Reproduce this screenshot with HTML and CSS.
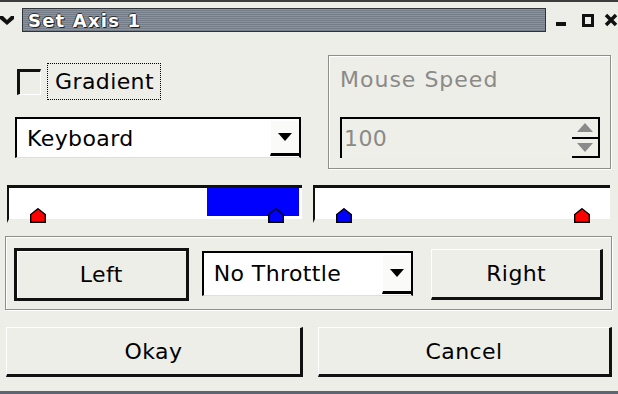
FILE: index.html
```html
<!DOCTYPE html>
<html>
<head>
<meta charset="utf-8">
<link rel="stylesheet" href="styles.css">
</head>
<body>
<div class="topline"></div>
<div class="titlerow">
  <svg class="menu-ico" width="14" height="14" viewBox="0 0 14 14"><path d="M0 3 L3 3 L7 7 L11 3 L14 3 L14 6 L7 12 L0 6 Z" fill="#111"/></svg>
  <div class="titlebar"><span class="title">Set Axis 1</span></div>
  <div class="wctl">
    <svg width="11" height="14" viewBox="0 0 11 14"><rect x="0" y="9" width="10" height="4" fill="#111"/></svg>
    <svg width="12" height="14" viewBox="0 0 12 14"><rect x="1.5" y="2.5" width="9" height="10" fill="none" stroke="#111" stroke-width="3"/></svg>
    <svg width="14" height="14" viewBox="0 0 14 14"><path d="M2 2 L12 12 M12 2 L2 12" stroke="#111" stroke-width="3.5"/></svg>
  </div>
</div>

<div class="row1">
  <div class="leftcol">
    <div class="checkrow">
      <span class="checkbox"></span>
      <span class="focuslabel">Gradient</span>
    </div>
    <div class="combo combo-kb">
      <span class="combo-text">Keyboard</span>
      <span class="combo-btn"><svg width="14" height="8" viewBox="0 0 14 8"><path d="M0 0 H14 L7 8 Z" fill="#000"/></svg></span>
    </div>
  </div>
  <div class="frame speedframe">
    <div class="speedlabel">Mouse Speed</div>
    <div class="spin">
      <span class="spin-text">100</span>
      <span class="spin-btns">
        <span class="spin-up"><svg width="16" height="9" viewBox="0 0 16 9"><path d="M8 0 L16 9 H0 Z" fill="#8a8a8a"/></svg></span>
        <span class="spin-down"><svg width="16" height="9" viewBox="0 0 16 9"><path d="M0 0 H16 L8 9 Z" fill="#8a8a8a"/></svg></span>
      </span>
    </div>
  </div>
</div>

<div class="sliders">
  <div class="slider slider-l">
    <div class="fill" style="left:198px;width:92px"></div>
    <svg class="marker" style="left:21px" width="16" height="15" viewBox="0 0 16 15"><path d="M8 0.7 L15.3 6.5 V14.3 H0.7 V6.5 Z" fill="#f00" stroke="#000" stroke-width="1.4"/></svg>
    <svg class="marker" style="left:259px" width="16" height="15" viewBox="0 0 16 15"><path d="M8 0.7 L15.3 6.5 V14.3 H0.7 V6.5 Z" fill="#00f" stroke="#000" stroke-width="1.4"/></svg>
  </div>
  <div class="slider slider-r">
    <svg class="marker" style="left:21px" width="16" height="15" viewBox="0 0 16 15"><path d="M8 0.7 L15.3 6.5 V14.3 H0.7 V6.5 Z" fill="#00f" stroke="#000" stroke-width="1.4"/></svg>
    <svg class="marker" style="left:259px" width="16" height="15" viewBox="0 0 16 15"><path d="M8 0.7 L15.3 6.5 V14.3 H0.7 V6.5 Z" fill="#f00" stroke="#000" stroke-width="1.4"/></svg>
  </div>
</div>

<div class="frame throttleframe">
  <div class="btn btn-left">Left</div>
  <div class="combo combo-th">
    <span class="combo-text">No Throttle</span>
    <span class="combo-btn"><svg width="14" height="8" viewBox="0 0 14 8"><path d="M0 0 H14 L7 8 Z" fill="#000"/></svg></span>
  </div>
  <div class="btn btn-right">Right</div>
</div>

<div class="bottomrow">
  <div class="btn btn-okay">Okay</div>
  <div class="btn btn-cancel">Cancel</div>
</div>
<div class="bottomline"></div>
</body>
</html>
```

FILE: styles.css
```css
html, body {
  margin: 0;
  padding: 0;
}
body {
  width: 618px;
  height: 394px;
  overflow: hidden;
  position: relative;
  background: #eeeee9;
  font-family: "DejaVu Sans", "Liberation Sans", sans-serif;
  font-size: 22px;
  letter-spacing: 0.4px;
  color: #000;
}
.topline {
  height: 2px;
  background: #3d3d3d;
}
.titlerow {
  display: flex;
  align-items: center;
  height: 24px;
  margin-top: 6px;
}
.menu-ico {
  margin-left: 0;
  flex: none;
}
.titlebar {
  margin-left: 8px;
  width: 523px;
  height: 22px;
  border: 1px solid #2f343a;
  background: repeating-linear-gradient(to bottom, #8a949f 0, #8a949f 1px, #737c87 1px, #737c87 2px);
  display: flex;
  align-items: center;
}
.title {
  margin-left: 5px;
  color: #fff;
  font-weight: bold;
  font-size: 18px;
  letter-spacing: 1.2px;
  text-shadow: 1px 1px 0 #222, -1px 0 0 #333, 0 -1px 0 #333;
}
.wctl {
  display: flex;
  align-items: center;
  margin-left: 10px;
  gap: 0;
}
.wctl svg:nth-child(2) { margin-left: 15px; }
.wctl svg:nth-child(3) { margin-left: 10px; }

.row1 {
  display: flex;
  gap: 27px;
  margin-top: 23px;
  padding-left: 15px;
}
.leftcol {
  width: 286px;
  display: flex;
  flex-direction: column;
}
.checkrow {
  display: flex;
  align-items: center;
  margin-top: 8px;
  height: 37px;
}
.checkbox {
  width: 20px;
  height: 22px;
  margin-left: 2px;
  border-top: 3px solid #111;
  border-left: 3px solid #111;
  border-right: 1px solid #fff;
  border-bottom: 1px solid #fff;
}
.focuslabel {
  margin-left: 6px;
  height: 35px;
  border: 1px dotted #000;
  padding: 0 6px 0 7px;
  display: flex;
  align-items: center;
}
.combo {
  display: flex;
  align-items: stretch;
  background: #fff;
  border-top: 2px solid #000;
  border-left: 2px solid #000;
  border-right: 2px solid #000;
  border-bottom: 1px solid #e0e0da;
  box-sizing: border-box;
}
.combo-kb {
  margin-top: 17px;
  width: 286px;
  height: 41px;
}
.combo-text {
  flex: 1;
  display: flex;
  align-items: center;
  padding-left: 10px;
}
.combo-btn {
  width: 28px;
  display: flex;
  align-items: center;
  justify-content: center;
  margin: 2px 0 1px 0;
  border-bottom: 3px solid #000;
  border-left: 1px solid #fff;
  background: #fafaf8;
}

.frame {
  border: 1px solid #8e8e8a;
  box-shadow: inset 1px 1px 0 #fff, 1px 1px 0 #fff;
  box-sizing: border-box;
}
.speedframe {
  width: 283px;
  height: 114px;
  padding: 11px 0 0 11px;
}
.speedlabel {
  color: #8a8a86;
  line-height: 26px;
  height: 26px;
  letter-spacing: 1px;
}
.spin {
  margin-top: 24px;
  width: 260px;
  height: 41px;
  box-sizing: border-box;
  display: flex;
  border-top: 2px solid #000;
  border-left: 2px solid #000;
  border-right: 2px solid #000;
  background: #efefea;
}
.spin-text {
  flex: 1;
  display: flex;
  align-items: center;
  padding-left: 2px;
  color: #8a8a86;
}
.spin-btns {
  width: 26px;
  display: flex;
  flex-direction: column;
}
.spin-up, .spin-down {
  flex: 1;
  display: flex;
  align-items: center;
  justify-content: center;
  border-bottom: 2px solid #000;
}

.sliders {
  display: flex;
  gap: 11px;
  margin-top: 16px;
  padding-left: 7px;
}
.slider {
  position: relative;
  height: 38px;
  box-sizing: border-box;
  background: #fff;
  border-top: 3px solid #111;
  border-left: 2px solid #111;
  border-bottom: 4px solid #eeeee9;
}
.slider-l { width: 295px; }
.slider-r { width: 297px; }
.fill {
  position: absolute;
  top: 0;
  height: 28px;
  background: #0000ff;
}
.marker {
  position: absolute;
  top: 20px;
}

.throttleframe {
  margin-top: 13px;
  margin-left: 5px;
  width: 607px;
  height: 74px;
  display: flex;
  align-items: center;
  padding: 0 8px 0 8px;
}
.btn {
  display: flex;
  align-items: center;
  justify-content: center;
  box-sizing: border-box;
  background: #eeeee9;
  border-top: 1px solid #fff;
  border-left: 1px solid #fff;
  border-right: 3px solid #111;
  border-bottom: 3px solid #111;
}
.btn-left {
  width: 175px;
  height: 53px;
  border: 3px solid #111;
  box-shadow: inset 1px 1px 0 #fff;
  margin-top: 2px;
}
.combo-th {
  margin-left: 13px;
  width: 212px;
  height: 45px;
}
.combo-th .combo-text { padding-left: 10px; }
.btn-right {
  margin-left: 18px;
  width: 172px;
  height: 51px;
  margin-top: 2px;
}

.bottomrow {
  display: flex;
  gap: 15px;
  margin-top: 17px;
  padding-left: 6px;
}
.btn-okay { width: 297px; height: 50px; }
.btn-cancel { width: 294px; height: 50px; }
.bottomline {
  position: absolute;
  left: 0;
  right: 0;
  bottom: 0;
  height: 3px;
  background: #5f6472;
}
```
